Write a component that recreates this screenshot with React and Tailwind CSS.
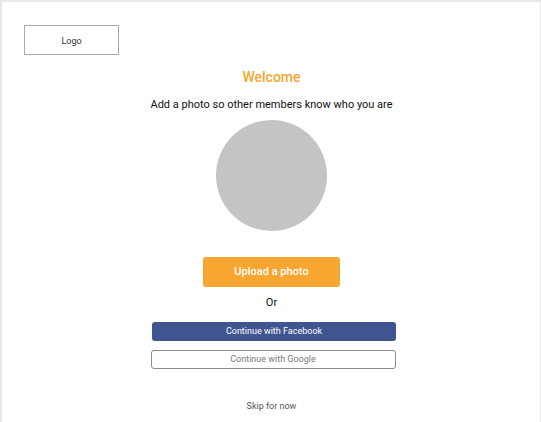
const App = () => {
  return (
    <div
      className="w-[541px] h-[422px] bg-white border-t-2 border-l-2 border-r border-[#e8e8e8] overflow-hidden"
      style={{ fontFamily: 'Roboto, "Liberation Sans", sans-serif' }}
    >
      <div className="pl-[22px] pt-[23px]">
        <div className="w-[95px] h-[30px] pt-[4px] border border-[#a8a8a8] flex items-center justify-center text-[9px] text-[#333]">
          Logo
        </div>
      </div>

      <div className="flex flex-col items-center pl-[1px]">
        <h1 className="mt-[12px] text-[14px] leading-[20px] font-medium text-[#f7a530]">Welcome</h1>
        <p className="mt-[10px] text-[11px] leading-[16px] text-[#111]">
          Add a photo so other members know who you are
        </p>
        <div className="mt-[7px] w-[111px] h-[111px] rounded-full bg-[#c4c4c4]" />
        <button className="mt-[26px] w-[137px] h-[30px] rounded-[3px] bg-[#f8a62f] text-white text-[11px] font-medium">
          Upload a photo
        </button>
        <span className="mt-[8px] text-[11px] leading-[16px] text-[#111]">Or</span>
        <button className="mt-[11px] ml-[5px] w-[244px] h-[19px] rounded-[3px] bg-[#3e5592] text-white text-[9px] leading-[19px]">
          Continue with Facebook
        </button>
        <button className="mt-[9px] ml-[3px] w-[245px] h-[19px] rounded-[3px] border border-[#8a8a8a] bg-white text-[#7a7a7a] text-[9px]">
          Continue with Google
        </button>
        <span className="mt-[31px] text-[9px] leading-[12px] text-[#555]">Skip for now</span>
      </div>
    </div>
  );
};

export default App;
